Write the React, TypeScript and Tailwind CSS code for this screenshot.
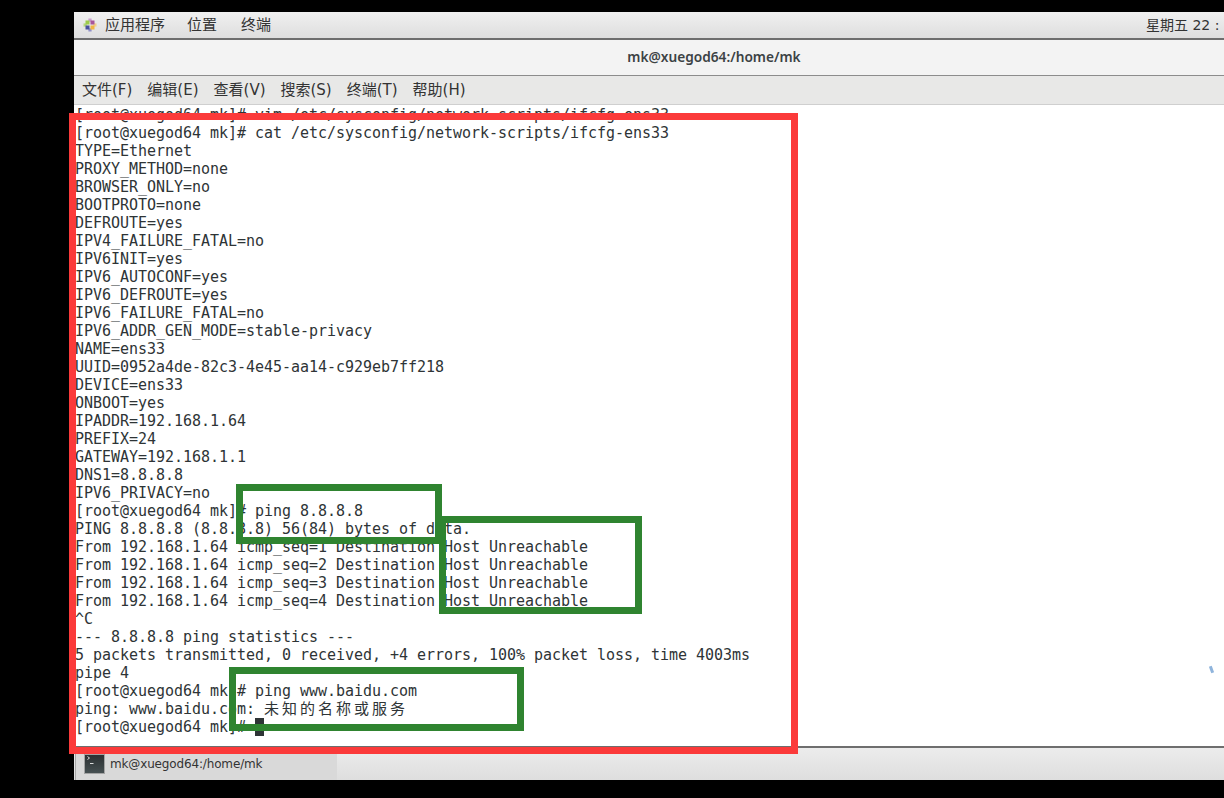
import React from 'react';

const lines = [
  '[root@xuegod64 mk]# vim /etc/sysconfig/network-scripts/ifcfg-ens33',
  '[root@xuegod64 mk]# cat /etc/sysconfig/network-scripts/ifcfg-ens33',
  'TYPE=Ethernet',
  'PROXY_METHOD=none',
  'BROWSER_ONLY=no',
  'BOOTPROTO=none',
  'DEFROUTE=yes',
  'IPV4_FAILURE_FATAL=no',
  'IPV6INIT=yes',
  'IPV6_AUTOCONF=yes',
  'IPV6_DEFROUTE=yes',
  'IPV6_FAILURE_FATAL=no',
  'IPV6_ADDR_GEN_MODE=stable-privacy',
  'NAME=ens33',
  'UUID=0952a4de-82c3-4e45-aa14-c929eb7ff218',
  'DEVICE=ens33',
  'ONBOOT=yes',
  'IPADDR=192.168.1.64',
  'PREFIX=24',
  'GATEWAY=192.168.1.1',
  'DNS1=8.8.8.8',
  'IPV6_PRIVACY=no',
  '[root@xuegod64 mk]# ping 8.8.8.8',
  'PING 8.8.8.8 (8.8.8.8) 56(84) bytes of data.',
  'From 192.168.1.64 icmp_seq=1 Destination Host Unreachable',
  'From 192.168.1.64 icmp_seq=2 Destination Host Unreachable',
  'From 192.168.1.64 icmp_seq=3 Destination Host Unreachable',
  'From 192.168.1.64 icmp_seq=4 Destination Host Unreachable',
  '^C',
  '--- 8.8.8.8 ping statistics ---',
  '5 packets transmitted, 0 received, +4 errors, 100% packet loss, time 4003ms',
  'pipe 4',
  '[root@xuegod64 mk]# ping www.baidu.com',
];

const menus = ['文件(F)', '编辑(E)', '查看(V)', '搜索(S)', '终端(T)', '帮助(H)'];

const uiFont = "font-['DejaVu_Sans','Noto_Sans_CJK_SC',sans-serif]";

const Logo = () => (
  <svg width="14" height="14" viewBox="0 0 14 14" className="shrink-0">
    <rect x="5.4" y="0.5" width="3.2" height="3.2" fill="#c9a0cf" />
    <rect x="5.4" y="10.3" width="3.2" height="3.2" fill="#8f8fc8" />
    <rect x="0.5" y="5.4" width="3.2" height="3.2" fill="#b5d67e" />
    <rect x="10.3" y="5.4" width="3.2" height="3.2" fill="#f0cf8a" />
    <rect x="2.5" y="2.5" width="4" height="4" fill="#9ccb4a" />
    <rect x="7.5" y="2.5" width="4" height="4" fill="#a8559a" />
    <rect x="2.5" y="7.5" width="4" height="4" fill="#47509e" />
    <rect x="7.5" y="7.5" width="4" height="4" fill="#f0b545" />
  </svg>
);

const TerminalIcon = () => (
  <div className="w-[21px] h-[20px] bg-gradient-to-b from-[#2b3032] to-[#465052] border border-[#a4a4a4] pl-[2px] pt-[1px] shrink-0">
    <svg width="10" height="11" viewBox="0 0 10 11" fill="none" stroke="#dcdcdc" strokeWidth="1">
      <path d="M0.5 0.5 L2.5 2 L0.5 3.5" />
      <path d="M3 7.5 H6.5" />
    </svg>
  </div>
);

export default function App() {
  return (
    <div className="relative w-[1224px] h-[798px] bg-black overflow-hidden pt-3 pl-[74px]">
      <div className="w-[1150px] h-[768px] flex flex-col bg-white">
        {/* top panel */}
        <div className={`h-[28px] shrink-0 flex items-center justify-between pl-[9px] bg-gradient-to-b from-[#f0f0f0] to-[#dedede] border-b-2 border-[#6e6e6e] text-[#333] text-[15px] ${uiFont}`}>
          <div className="flex items-center">
            <Logo />
            <span className="ml-[8px]">应用程序</span>
            <span className="ml-[22px]">位置</span>
            <span className="ml-[24px]">终端</span>
          </div>
          <span className="w-[78px] whitespace-nowrap overflow-hidden text-[14px]">星期五 22 :</span>
        </div>
        {/* title bar */}
        <div className="h-[36px] shrink-0 flex items-center justify-center pl-[130px] bg-[#f3f3f3] border-b border-[#8c8c8c] text-[13.7px] font-semibold text-[#3c4244] font-['Noto_Sans',sans-serif]">
          mk@xuegod64:/home/mk
        </div>
        {/* menu */}
        <div className={`h-[29px] shrink-0 flex items-center pl-[8px] gap-[15px] bg-[#e8e8e7] border-b border-[#cfcfcf] text-[15px] text-[#333] ${uiFont}`}>
          {menus.map((m) => (
            <span key={m}>{m}</span>
          ))}
        </div>
        {/* terminal */}
        <div className="flex-1 min-h-0 overflow-hidden pl-px pt-px font-['DejaVu_Sans_Mono','Noto_Sans_CJK_SC',monospace] text-[15px] leading-[18px] tracking-[-0.03px] text-[#2e3436] whitespace-pre">
          {lines.map((l, i) => (
            <div key={i} className="h-[18px]">{l}</div>
          ))}
          <div className="h-[18px]">ping: www.baidu.com: <span className="tracking-[3px]">未知的名称或服务</span></div>
          <div className="h-[18px] flex">
            <span>[root@xuegod64 mk]# </span>
            <span className="inline-block w-[9px] h-[18px] bg-[#2e3436]" />
          </div>
        </div>
        {/* window list */}
        <div className={`h-[34px] shrink-0 flex bg-gradient-to-b from-[#ececec] to-[#dedede] border-t-2 border-[#6e6e6e] text-[12px] text-[#333] ${uiFont}`}>
          <div className="w-[262px] ml-px flex items-center gap-[5px] pl-[8px] bg-[#d9d9d9] border-l border-[#a8a8a8]">
            <TerminalIcon />
            <span className="tracking-[-0.15px]">mk@xuegod64:/home/mk</span>
          </div>
        </div>
      </div>

      {/* annotation boxes drawn over the screenshot */}
      <div className="absolute left-[69px] top-[113px] w-[729px] h-[641px] border-[7px] border-[#fb3a3a]" />
      <div className="absolute left-[236px] top-[484px] w-[206px] h-[60px] border-[7px] border-[#2f8430]" />
      <div className="absolute left-[439px] top-[516px] w-[203px] h-[98px] border-[7px] border-[#2f8430]" />
      <div className="absolute left-[229px] top-[667px] w-[295px] h-[64px] border-[7px] border-[#2f8430]" />
      <div className="absolute left-[1210px] top-[666px] w-[3px] h-[7px] bg-[#8fb4dc] rotate-[-20deg]" />
    </div>
  );
}
